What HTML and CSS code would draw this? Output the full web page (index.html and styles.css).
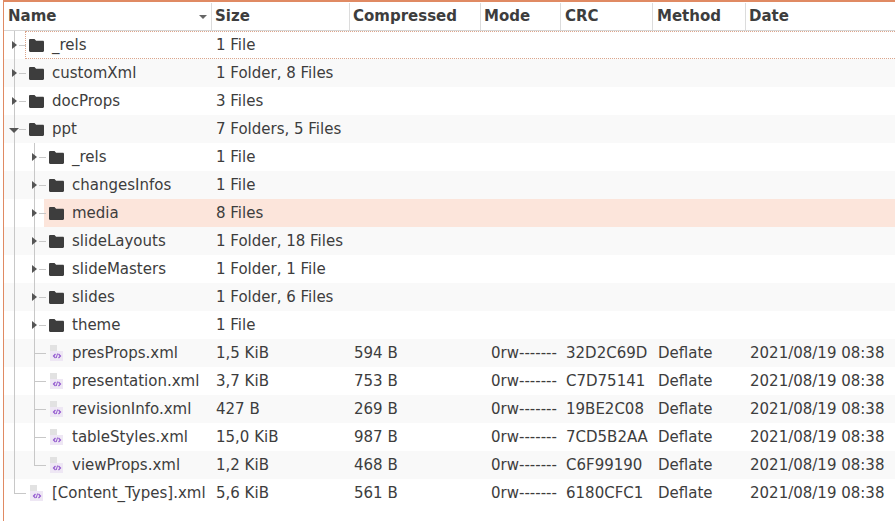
FILE: index.html
```html
<!DOCTYPE html>
<html lang="en">
<head>
  <meta charset="UTF-8">
  <title>Archive contents</title>
  <link rel="stylesheet" href="styles.css">
</head>
<body>
  <svg class="defs" width="0" height="0">
    <symbol id="folder" viewBox="0 0 15 13">
      <path d="M0 1.2C0 .5.5 0 1.2 0h4.3l1.6 1.8h6.7c.7 0 1.2.5 1.2 1.2v8.8c0 .7-.5 1.2-1.2 1.2H1.2C.5 13 0 12.500 0 11.800z" fill="#3d3d3d"/>
    </symbol>
    <symbol id="xml" viewBox="0 0 13 16">
      <path d="M0 0h7v6h6v10H0z" fill="#eee7f4"/>
      <path d="M0 0h7v6H0z" fill="#e2e2e2"/>
      <path d="M7 8.500 5 10.500l2 2M10 8.500l2 2-2 2" transform="translate(-1.500 .5)" fill="none" stroke="#9257cf" stroke-width="1.200"/>
      <path d="M7.600 8.500 6.200 13" fill="none" stroke="#9257cf"/>
    </symbol>
  </svg>

  <div class="window">
    <div class="head">
      <div class="head-cell col-name">Name<span class="sort"></span></div>
      <div class="head-cell col-size">Size</div>
      <div class="head-cell col-comp">Compressed</div>
      <div class="head-cell col-mode">Mode</div>
      <div class="head-cell col-crc">CRC</div>
      <div class="head-cell col-method">Method</div>
      <div class="head-cell col-date">Date</div>
    </div>

    <div class="row">
      <span class="guide branch"><i class="arrow"></i></span>
      <div class="body focus">
        <div class="label"><svg class="icon-folder"><use href="#folder"/></svg>_rels</div>
        <div class="col-size">1 File</div><div class="col-comp"></div><div class="col-mode"></div><div class="col-crc"></div><div class="col-method"></div><div class="col-date"></div>
      </div>
    </div>
    <div class="row alt">
      <span class="guide branch"><i class="arrow"></i></span>
      <div class="body">
        <div class="label"><svg class="icon-folder"><use href="#folder"/></svg>customXml</div>
        <div class="col-size">1 Folder, 8 Files</div><div class="col-comp"></div><div class="col-mode"></div><div class="col-crc"></div><div class="col-method"></div><div class="col-date"></div>
      </div>
    </div>
    <div class="row">
      <span class="guide branch"><i class="arrow"></i></span>
      <div class="body">
        <div class="label"><svg class="icon-folder"><use href="#folder"/></svg>docProps</div>
        <div class="col-size">3 Files</div><div class="col-comp"></div><div class="col-mode"></div><div class="col-crc"></div><div class="col-method"></div><div class="col-date"></div>
      </div>
    </div>
    <div class="row alt">
      <span class="guide branch"><i class="arrow open"></i></span>
      <div class="body">
        <div class="label"><svg class="icon-folder"><use href="#folder"/></svg>ppt</div>
        <div class="col-size">7 Folders, 5 Files</div><div class="col-comp"></div><div class="col-mode"></div><div class="col-crc"></div><div class="col-method"></div><div class="col-date"></div>
      </div>
    </div>

    <div class="row">
      <span class="guide"></span><span class="guide branch"><i class="arrow"></i></span>
      <div class="body">
        <div class="label"><svg class="icon-folder"><use href="#folder"/></svg>_rels</div>
        <div class="col-size">1 File</div><div class="col-comp"></div><div class="col-mode"></div><div class="col-crc"></div><div class="col-method"></div><div class="col-date"></div>
      </div>
    </div>
    <div class="row alt">
      <span class="guide"></span><span class="guide branch"><i class="arrow"></i></span>
      <div class="body">
        <div class="label"><svg class="icon-folder"><use href="#folder"/></svg>changesInfos</div>
        <div class="col-size">1 File</div><div class="col-comp"></div><div class="col-mode"></div><div class="col-crc"></div><div class="col-method"></div><div class="col-date"></div>
      </div>
    </div>
    <div class="row">
      <span class="guide"></span><span class="guide branch"><i class="arrow"></i></span>
      <div class="body selected">
        <div class="label"><svg class="icon-folder"><use href="#folder"/></svg>media</div>
        <div class="col-size">8 Files</div><div class="col-comp"></div><div class="col-mode"></div><div class="col-crc"></div><div class="col-method"></div><div class="col-date"></div>
      </div>
    </div>
    <div class="row alt">
      <span class="guide"></span><span class="guide branch"><i class="arrow"></i></span>
      <div class="body">
        <div class="label"><svg class="icon-folder"><use href="#folder"/></svg>slideLayouts</div>
        <div class="col-size">1 Folder, 18 Files</div><div class="col-comp"></div><div class="col-mode"></div><div class="col-crc"></div><div class="col-method"></div><div class="col-date"></div>
      </div>
    </div>
    <div class="row">
      <span class="guide"></span><span class="guide branch"><i class="arrow"></i></span>
      <div class="body">
        <div class="label"><svg class="icon-folder"><use href="#folder"/></svg>slideMasters</div>
        <div class="col-size">1 Folder, 1 File</div><div class="col-comp"></div><div class="col-mode"></div><div class="col-crc"></div><div class="col-method"></div><div class="col-date"></div>
      </div>
    </div>
    <div class="row alt">
      <span class="guide"></span><span class="guide branch"><i class="arrow"></i></span>
      <div class="body">
        <div class="label"><svg class="icon-folder"><use href="#folder"/></svg>slides</div>
        <div class="col-size">1 Folder, 6 Files</div><div class="col-comp"></div><div class="col-mode"></div><div class="col-crc"></div><div class="col-method"></div><div class="col-date"></div>
      </div>
    </div>
    <div class="row">
      <span class="guide"></span><span class="guide branch"><i class="arrow"></i></span>
      <div class="body">
        <div class="label"><svg class="icon-folder"><use href="#folder"/></svg>theme</div>
        <div class="col-size">1 File</div><div class="col-comp"></div><div class="col-mode"></div><div class="col-crc"></div><div class="col-method"></div><div class="col-date"></div>
      </div>
    </div>

    <div class="row alt">
      <span class="guide"></span><span class="guide branch"></span>
      <div class="body">
        <div class="label"><svg class="icon-xml"><use href="#xml"/></svg>presProps.xml</div>
        <div class="col-size">1,5 KiB</div><div class="col-comp">594 B</div><div class="col-mode">0rw-------</div><div class="col-crc">32D2C69D</div><div class="col-method">Deflate</div><div class="col-date">2021/08/19 08:38</div>
      </div>
    </div>
    <div class="row">
      <span class="guide"></span><span class="guide branch"></span>
      <div class="body">
        <div class="label"><svg class="icon-xml"><use href="#xml"/></svg>presentation.xml</div>
        <div class="col-size">3,7 KiB</div><div class="col-comp">753 B</div><div class="col-mode">0rw-------</div><div class="col-crc">C7D75141</div><div class="col-method">Deflate</div><div class="col-date">2021/08/19 08:38</div>
      </div>
    </div>
    <div class="row alt">
      <span class="guide"></span><span class="guide branch"></span>
      <div class="body">
        <div class="label"><svg class="icon-xml"><use href="#xml"/></svg>revisionInfo.xml</div>
        <div class="col-size">427 B</div><div class="col-comp">269 B</div><div class="col-mode">0rw-------</div><div class="col-crc">19BE2C08</div><div class="col-method">Deflate</div><div class="col-date">2021/08/19 08:38</div>
      </div>
    </div>
    <div class="row">
      <span class="guide"></span><span class="guide branch"></span>
      <div class="body">
        <div class="label"><svg class="icon-xml"><use href="#xml"/></svg>tableStyles.xml</div>
        <div class="col-size">15,0 KiB</div><div class="col-comp">987 B</div><div class="col-mode">0rw-------</div><div class="col-crc">7CD5B2AA</div><div class="col-method">Deflate</div><div class="col-date">2021/08/19 08:38</div>
      </div>
    </div>
    <div class="row alt">
      <span class="guide"></span><span class="guide branch last"></span>
      <div class="body">
        <div class="label"><svg class="icon-xml"><use href="#xml"/></svg>viewProps.xml</div>
        <div class="col-size">1,2 KiB</div><div class="col-comp">468 B</div><div class="col-mode">0rw-------</div><div class="col-crc">C6F99190</div><div class="col-method">Deflate</div><div class="col-date">2021/08/19 08:38</div>
      </div>
    </div>
    <div class="row">
      <span class="guide branch last"></span>
      <div class="body">
        <div class="label"><svg class="icon-xml"><use href="#xml"/></svg>[Content_Types].xml</div>
        <div class="col-size">5,6 KiB</div><div class="col-comp">561 B</div><div class="col-mode">0rw-------</div><div class="col-crc">6180CFC1</div><div class="col-method">Deflate</div><div class="col-date">2021/08/19 08:38</div>
      </div>
    </div>
  </div>
</body>
</html>
```

FILE: styles.css
```css
html, body {
  margin: 0;
  padding: 0;
  height: 100%;
  overflow: hidden;
}

body {
  font-family: "DejaVu Sans", sans-serif;
  font-size: 15px;
  color: #3d3d3d;
  background: #fff;
}

.defs {
  display: block;
  height: 0;
}

.window {
  height: 100%;
  box-sizing: border-box;
  margin-left: 3px;
  border-left: 1px solid #e08a63;
  border-top: 2px solid #e08a63;
}

/* Header */
.head {
  display: flex;
  height: 29px;
  box-sizing: border-box;
  border-bottom: 1px solid #d6d6d6;
}

.head-cell {
  display: flex;
  align-items: center;
  box-sizing: border-box;
  font-weight: bold;
  padding-left: 3px;
  padding-bottom: 1px;
  margin-top: 1px;
  border-right: 1px solid #dcdcdc;
}

.head-cell.col-name {
  width: 208px;
  padding-left: 4px;
}

.head-cell.col-date { border-right: none; }

.sort {
  margin-left: auto;
  margin-right: 4px;
  margin-top: 2px;
  border-left: 4px solid transparent;
  border-right: 4px solid transparent;
  border-top: 4px solid #666;
}

/* Columns */
.col-size { width: 138px; padding-left: 4px; box-sizing: border-box; }
.col-comp { width: 131px; padding-left: 4px; box-sizing: border-box; }
.col-mode { width: 80px; padding-left: 10px; box-sizing: border-box; }
.col-crc { width: 92px; padding-left: 5px; box-sizing: border-box; }
.col-method { width: 93px; padding-left: 5px; box-sizing: border-box; }
.col-date { width: 149px; padding-left: 4px; box-sizing: border-box; white-space: nowrap; }

.head-cell.col-size { padding-left: 3px; }
.head-cell.col-comp { padding-left: 3px; }
.head-cell.col-mode { padding-left: 3px; }
.head-cell.col-crc { padding-left: 4px; }
.head-cell.col-method { padding-left: 4px; }
.head-cell.col-date { padding-left: 3px; }

/* Rows */
.row {
  display: flex;
  height: 28px;
}

.row.alt {
  background: #f9f9f9;
}

.body {
  flex: 1;
  min-width: 0;
  display: flex;
  align-items: center;
  box-sizing: border-box;
  height: 28px;
}

.body.selected {
  background: #fce5db;
}

.body.focus {
  margin-left: 1px;
  border: 1px dotted #dba58c;
  border-right: none;
}

.body.focus .label {
  margin-left: -2px;
}

.label {
  flex: 1 1 0;
  min-width: 0;
  display: flex;
  align-items: center;
  white-space: nowrap;
}

.body > div:not(.label) {
  flex: none;
}

/* Tree guides */
.guide {
  position: relative;
  flex: none;
  width: 20px;
  height: 28px;
}

.guide::before {
  content: "";
  position: absolute;
  left: 10px;
  top: 0;
  bottom: 0;
  border-left: 1px solid #c8c8c8;
}

.guide.branch::after {
  content: "";
  position: absolute;
  left: 15px;
  top: 14px;
  width: 7px;
  border-top: 1px solid #c8c8c8;
}

.guide.branch.last::before {
  bottom: 13px;
}

.guide.branch.last::after,
.guide.branch:not(:has(.arrow))::after {
  left: 11px;
  width: 11px;
}

.arrow {
  position: absolute;
  z-index: 1;
  left: 8px;
  top: 10px;
  border-left: 5px solid #555;
  border-top: 4px solid transparent;
  border-bottom: 4px solid transparent;
}

.arrow.open {
  left: 5px;
  top: 13px;
  border-top: 5px solid #555;
  border-left: 5px solid transparent;
  border-right: 5px solid transparent;
  border-bottom: none;
}

/* Icons */
.icon-folder {
  width: 15px;
  height: 13px;
  margin-left: 5px;
  margin-right: 8px;
  flex: none;
}

.icon-xml {
  width: 13px;
  height: 16px;
  margin-left: 6px;
  margin-right: 9px;
  flex: none;
}
```
